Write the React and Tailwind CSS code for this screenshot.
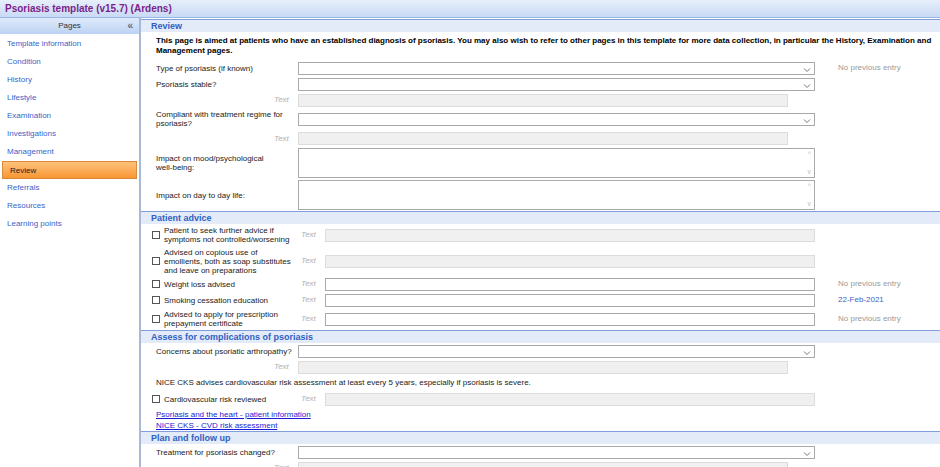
import React from 'react';

const nav = ['Template information', 'Condition', 'History', 'Lifestyle', 'Examination', 'Investigations', 'Management', 'Review', 'Referrals', 'Resources', 'Learning points'];

const Chevron = () => (
    <svg width="8" height="6" viewBox="0 0 8 6" className="absolute right-[3px] top-[4px]">
        <path d="M1 1.5 L4 4.5 L7 1.5" fill="none" stroke="#666" strokeWidth="0.9" />
    </svg>
);

const Select = () => <div className="relative w-[517px] h-[13px] border border-[#a9a9a9] bg-white"><Chevron /></div>;
const TextInput = ({ white }) => (
    <div className="flex items-center">
        <span className="w-[27px] pl-[3px] italic text-[#b0b0b0]">Text</span>
        <div className={`w-[490px] h-[13px] border ${white ? 'border-[#a9a9a9] bg-white' : 'border-[#dcdcdc] bg-[#f0f0f0]'}`} />
    </div>
);
const Area = () => (
    <div className="relative w-[517px] h-[30px] border border-[#a9a9a9] bg-white">
        <span className="absolute right-[3px] top-0 text-[7px] text-[#bbb]">^</span>
        <span className="absolute right-[3px] bottom-0 text-[7px] text-[#bbb]">v</span>
    </div>
);
const Box = () => <span className="inline-block w-[8px] h-[8px] border border-[#555] bg-white shrink-0" />;

const Header = ({ children }) => (
    <div className="h-[13px] border-t border-[#7f9edb] bg-[#e3ebf8] pl-[10px] font-bold text-[#2f5fc4] text-[9px] leading-[12px]">{children}</div>
);

const Row = ({ label, h, children, right, rightCls = 'text-[#999]' }) => (
    <div className="flex items-center" style={{ height: h }}>
        <div className="w-[157px] shrink-0 pl-[15px] leading-[9px]">{label}</div>
        <div className="w-[517px] shrink-0">{children}</div>
        {right && <div className={`ml-[23px] ${rightCls}`}>{right}</div>}
    </div>
);

const CheckRow = ({ label, h, white, right, rightCls = 'text-[#999]' }) => (
    <div className="flex items-center" style={{ height: h }}>
        <div className="w-[157px] shrink-0 pl-[11px] flex items-center gap-[4px] leading-[9px]"><Box /><span>{label}</span></div>
        <TextInput white={white} />
        {right && <div className={`ml-[23px] ${rightCls}`}>{right}</div>}
    </div>
);

export default function App() {
    return (
        <div className="w-[940px] h-[467px] overflow-hidden bg-white text-[8px] text-[#222]" style={{ fontFamily: '"Liberation Sans", Arial, sans-serif' }}>
            <div className="h-[18px] bg-gradient-to-b from-[#e7effa] to-[#c8daf5] border-b border-[#9ab6e4] pl-[5px] leading-[17px] font-bold text-[10px] text-[#7b1f8a]">
                Psoriasis template (v15.7) (Ardens)
            </div>
            <div className="flex h-[449px]">
                <div className="w-[141px] border-r-2 border-[#a8b8d6] shrink-0">
                    <div className="h-[16px] bg-gradient-to-b from-[#dfeafb] to-[#bcd2f3] relative text-center leading-[16px] text-[#333]">
                        Pages<span className="absolute right-[6px] top-0 text-[10px] text-[#345]">«</span>
                    </div>
                    <div className="flex flex-col pt-[1px]">
                        {nav.map(n => (
                            <div key={n} className={`h-[18px] leading-[18px] pl-[7px] ${n === 'Review' ? 'mx-[2px] pl-[5px] bg-gradient-to-b from-[#ffc27a] to-[#f7962f] border border-[#d98a3a] text-[#222]' : 'text-[#3a64c8]'}`}>{n}</div>
                        ))}
                    </div>
                </div>
                <div className="flex-1">
                    <div className="h-[1px]" />
                    <Header>Review</Header>
                    <div className="pl-[15px] pr-[4px] pt-[4px] pb-[4px] font-bold leading-[10px] text-[8px] text-black">
                        This page is aimed at patients who have an established diagnosis of psoriasis. You may also wish to refer to other pages in this template for more data collection, in particular the History, Examination and Management pages.
                    </div>
                    <Row label="Type of psoriasis (if known)" h={16} right="No previous entry"><Select /></Row>
                    <Row label="Psoriasis stable?" h={16}><Select /></Row>
                    <Row label="" h={16}><div className="-ml-[27px]"><TextInput /></div></Row>
                    <Row label={<>Compliant with treatment regime for<br />psoriasis?</>} h={22}><Select /></Row>
                    <Row label="" h={17}><div className="-ml-[27px]"><TextInput /></div></Row>
                    <Row label={<>Impact on mood/psychological<br />well-being:</>} h={32}><Area /></Row>
                    <Row label="Impact on day to day life:" h={32}><Area /></Row>
                    <Header>Patient advice</Header>
                    <CheckRow h={22} label={<>Patient to seek further advice if<br />symptoms not controlled/worsening</>} />
                    <CheckRow h={30} label={<>Advised on copious use of<br />emollients, both as soap substitutes<br />and leave on preparations</>} />
                    <CheckRow h={16} white label="Weight loss advised" right="No previous entry" />
                    <CheckRow h={16} white label="Smoking cessation education" right="22-Feb-2021" rightCls="text-[#3a64c8]" />
                    <CheckRow h={22} white label={<>Advised to apply for prescription<br />prepayment certificate</>} right="No previous entry" />
                    <Header>Assess for complications of psoriasis</Header>
                    <Row label="Concerns about psoriatic arthropathy?" h={16}><Select /></Row>
                    <Row label="" h={16}><div className="-ml-[27px]"><TextInput /></div></Row>
                    <div className="h-[16px] pl-[15px] flex items-center">NICE CKS advises cardiovascular risk assessment at least every 5 years, especially if psoriasis is severe.</div>
                    <CheckRow h={16} label="Cardiovascular risk reviewed" />
                    <div className="pl-[15px] pt-[2px] leading-[11px] text-[#1a1ad8] underline">
                        <div>Psoriasis and the heart - patient information</div>
                        <div>NICE CKS - CVD risk assessment</div>
                    </div>
                    <Header>Plan and follow up</Header>
                    <Row label="Treatment for psoriasis changed?" h={16}><Select /></Row>
                    <Row label="" h={16}><div className="-ml-[27px]"><TextInput /></div></Row>
                </div>
            </div>
        </div>
    );
}
